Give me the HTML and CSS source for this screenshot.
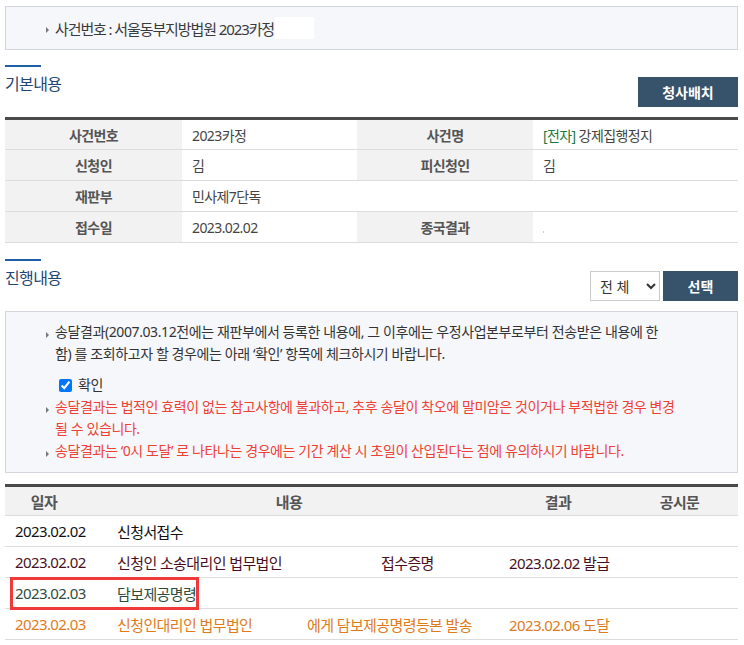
FILE: index.html
```html
<!DOCTYPE html>
<html lang="ko">
<head>
    <meta charset="UTF-8">
    <meta name="viewport" content="width=device-width, initial-scale=1.0">
    <title>사건검색 결과</title>
    <link rel="stylesheet" href="styles.css">
</head>
<body>
    <div class="case-bar">
        <span class="bullet"></span>
        <span>사건번호 : 서울동부지방법원 2023카정</span>
        <span class="mask"></span>
    </div>

    <div class="section-head">
        <h2 class="title">기본내용</h2>
        <button class="btn btn-wide">청사배치</button>
    </div>

    <table class="info">
        <colgroup>
            <col style="width:177px">
            <col style="width:175px">
            <col style="width:176px">
            <col>
        </colgroup>
        <tr>
            <th>사건번호</th>
            <td>2023카정</td>
            <th>사건명</th>
            <td><span class="tag">[전자]</span> 강제집행정지</td>
        </tr>
        <tr>
            <th>신청인</th>
            <td>김</td>
            <th>피신청인</th>
            <td>김</td>
        </tr>
        <tr>
            <th>재판부</th>
            <td colspan="3">민사제7단독</td>
        </tr>
        <tr>
            <th>접수일</th>
            <td>2023.02.02</td>
            <th>종국결과</th>
            <td><span class="dot"></span></td>
        </tr>
    </table>

    <div class="section-head second">
        <h2 class="title">진행내용</h2>
        <div class="filter">
            <select class="select">
                <option>전 체</option>
            </select>
            <button class="btn btn-narrow">선택</button>
        </div>
    </div>

    <div class="notice">
        <p class="item">송달결과(2007.03.12전에는 재판부에서 등록한 내용에, 그 이후에는 우정사업본부로부터 전송받은 내용에 한<br>함) 를 조회하고자 할 경우에는 아래 ‘확인’ 항목에 체크하시기 바랍니다.</p>
        <label class="check"><input type="checkbox" checked> 확인</label>
        <p class="item warn">송달결과는 법적인 효력이 없는 참고사항에 불과하고, 추후 송달이 착오에 말미암은 것이거나 부적법한 경우 변경<br>될 수 있습니다.</p>
        <p class="item warn">송달결과는 ‘0시 도달’ 로 나타나는 경우에는 기간 계산 시 초일이 산입된다는 점에 유의하시기 바랍니다.</p>
    </div>

    <div class="progress-wrap">
        <table class="progress">
            <colgroup>
                <col style="width:78px">
                <col style="width:412px">
                <col style="width:126px">
                <col>
            </colgroup>
            <tr>
                <th>일자</th>
                <th>내용</th>
                <th>결과</th>
                <th>공시문</th>
            </tr>
            <tr class="row-black">
                <td>2023.02.02</td>
                <td class="content">신청서접수</td>
                <td class="result"></td>
                <td></td>
            </tr>
            <tr class="row-maroon">
                <td>2023.02.02</td>
                <td class="content"><span class="party-wide">신청인 소송대리인 법무법인</span>접수증명</td>
                <td class="result">2023.02.02 발급</td>
                <td></td>
            </tr>
            <tr class="row-green">
                <td>2023.02.03</td>
                <td class="content">담보제공명령</td>
                <td class="result"></td>
                <td></td>
            </tr>
            <tr class="row-orange">
                <td>2023.02.03</td>
                <td class="content"><span class="party">신청인대리인 법무법인</span>에게 담보제공명령등본 발송</td>
                <td class="result">2023.02.06 도달</td>
                <td></td>
            </tr>
        </table>
        <div class="highlight"></div>
    </div>
</body>
</html>
```

FILE: styles.css
```css
* {
    box-sizing: border-box;
    margin: 0;
    padding: 0;
}

body {
    font-family: "Noto Sans", "Noto Sans CJK KR", sans-serif;
    font-size: 14px;
    letter-spacing: -0.6px;
    color: #333;
    background: #fff;
    margin: 6px 6px 0 5px;
}

.case-bar {
    display: flex;
    align-items: center;
    height: 44px;
    padding-left: 40px;
    background-color: #f6f7fb;
    border: 1px solid #d3d6de;
    font-size: 15px;
    letter-spacing: -1.1px;
    color: #3a3a3a;
}

.bullet {
    width: 0;
    height: 0;
    margin: 4px 6px 0 0;
    border-left: 3px solid #777;
    border-top: 3px solid transparent;
    border-bottom: 3px solid transparent;
}

.mask {
    display: inline-block;
    width: 39px;
    height: 22px;
    margin-left: 1px;
    background: #fff;
}

.section-head {
    display: flex;
    justify-content: space-between;
    align-items: flex-start;
    margin-top: 15px;
}

.section-head.second {
    margin-top: 16px;
}

.title {
    font-size: 16px;
    font-weight: normal;
    line-height: 20px;
    color: #1f4674;
}

.title::before {
    content: "";
    display: block;
    width: 36px;
    height: 2px;
    margin-bottom: 7px;
    background-color: #1b5fa6;
}

.btn {
    height: 30px;
    margin-top: 12px;
    background-color: #36536b;
    border: none;
    color: #fff;
    font-family: inherit;
    font-size: 14px;
    font-weight: bold;
    letter-spacing: 0;
    cursor: pointer;
}

.btn-wide {
    width: 100px;
}

.btn-narrow {
    width: 75px;
    margin-top: 0;
    margin-left: 3px;
}

.filter {
    display: flex;
    margin-top: 12px;
}

.select {
    width: 70px;
    height: 30px;
    padding-left: 5px;
    border: 1px solid #ccc;
    background: #fff;
    color: #333;
    font-family: inherit;
    font-size: 14px;
}

table {
    width: 100%;
    border-collapse: collapse;
    table-layout: fixed;
    border-top: 3px solid #4a4a4a;
}

.info {
    margin-top: 10px;
}

.info th,
.info td {
    height: 31px;
    border-bottom: 1px solid #dcdcdc;
    white-space: nowrap;
}

.info th {
    background-color: #f2f2f2;
    color: #555;
    font-weight: bold;
    text-align: center;
}

.info td {
    padding-left: 10px;
    color: #444;
}

.tag {
    color: #1d7a3c;
}

.dot {
    display: inline-block;
    width: 1px;
    height: 2px;
    background: #ccc;
}

.notice {
    margin-top: 10px;
    padding: 9px 0 10px 40px;
    background-color: #f6f7fb;
    border: 1px solid #d3d6de;
    line-height: 22px;
    letter-spacing: -0.4px;
    color: #333;
}

.item {
    display: flex;
    white-space: nowrap;
}

.item::before {
    content: "";
    flex: none;
    width: 0;
    height: 0;
    margin: 11px 6px 0 0;
    border-left: 3px solid #777;
    border-top: 3px solid transparent;
    border-bottom: 3px solid transparent;
}

.warn {
    color: #ee4136;
}

.check {
    display: flex;
    align-items: center;
    margin-top: 9px;
    padding-left: 13px;
}

.check input {
    width: 13px;
    height: 13px;
    margin: 0 6px 0 0;
}

.progress-wrap {
    position: relative;
    margin-top: 11px;
}

.progress th,
.progress td {
    height: 31px;
    border-bottom: 1px solid #dcdcdc;
    white-space: nowrap;
    font-size: 15px;
}

.progress th {
    background-color: #f2f2f2;
    color: #555;
    font-weight: bold;
    text-align: center;
    height: 30px;
}

.progress td:first-child {
    padding-left: 10px;
}

.progress .content {
    padding-left: 34px;
}

.progress .result {
    padding-left: 14px;
}

.party-wide {
    display: inline-block;
    width: 264px;
}

.party {
    display: inline-block;
    width: 190px;
}

.row-black td {
    color: #111;
}

.row-maroon td {
    color: #4a0f1c;
}

.row-green td {
    color: #2c4d3c;
}

.row-orange td {
    color: #e07b1c;
}

.highlight {
    position: absolute;
    left: 5px;
    top: 93px;
    width: 189px;
    height: 33px;
    border: 3px solid #f03a3a;
}
```
